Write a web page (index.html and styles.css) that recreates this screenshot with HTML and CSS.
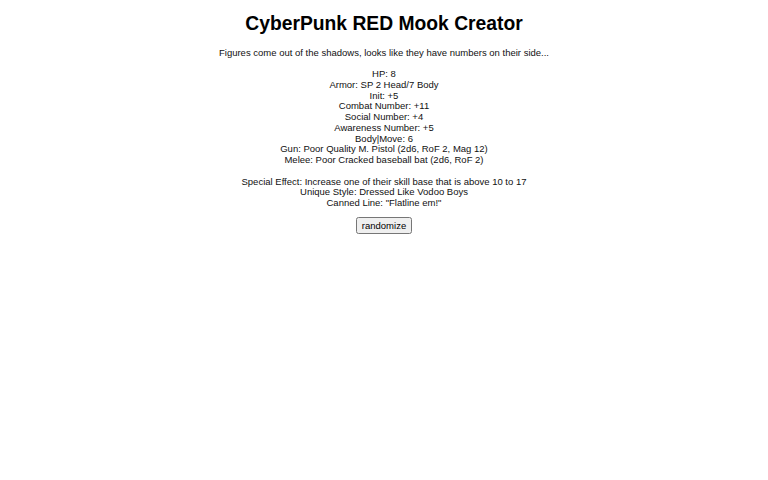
FILE: index.html
```html
<!DOCTYPE html>
<html lang="en">
<head>
    <meta charset="UTF-8">
    <meta name="viewport" content="width=device-width, initial-scale=1.0">
    <title>CyberPunk RED Mook Creator</title>
    <link rel="stylesheet" href="styles.css">
</head>
<body>
    <h1>CyberPunk RED Mook Creator</h1>
    <p class="intro">Figures come out of the shadows, looks like they have numbers on their side...</p>

    <div class="stats" id="stats">
        HP: 8<br>
        Armor: SP 2 Head/7 Body<br>
        Init: +5<br>
        Combat Number: +11<br>
        Social Number: +4<br>
        Awareness Number: +5<br>
        Body|Move: 6<br>
        Gun: Poor Quality M. Pistol (2d6, RoF 2, Mag 12)<br>
        Melee: Poor Cracked baseball bat (2d6, RoF 2)<br>
        <br>
        Special Effect: Increase one of their skill base that is above 10 to 17<br>
        Unique Style: Dressed Like Vodoo Boys<br>
        Canned Line: "Flatline em!"
    </div>

    <button class="roll">randomize</button>
</body>
</html>
```
FILE: styles.css
```css
body {
    font-family: 'Liberation Sans', Arial, sans-serif;
    font-size: 9.5px;
    color: #111;
    background: #fff;
    text-align: center;
    margin: 8px;
}
h1 {
    font-size: 19.3px;
    margin: 5px 0 12px;
    color: #000;
}
.intro {
    margin: 0 0 11px;
}
.stats {
    line-height: 10.75px;
}
.roll {
    font-family: 'Liberation Sans', Arial, sans-serif;
    font-size: 9.5px;
    margin-top: 8px;
    padding: 1px 4px;
}
```
